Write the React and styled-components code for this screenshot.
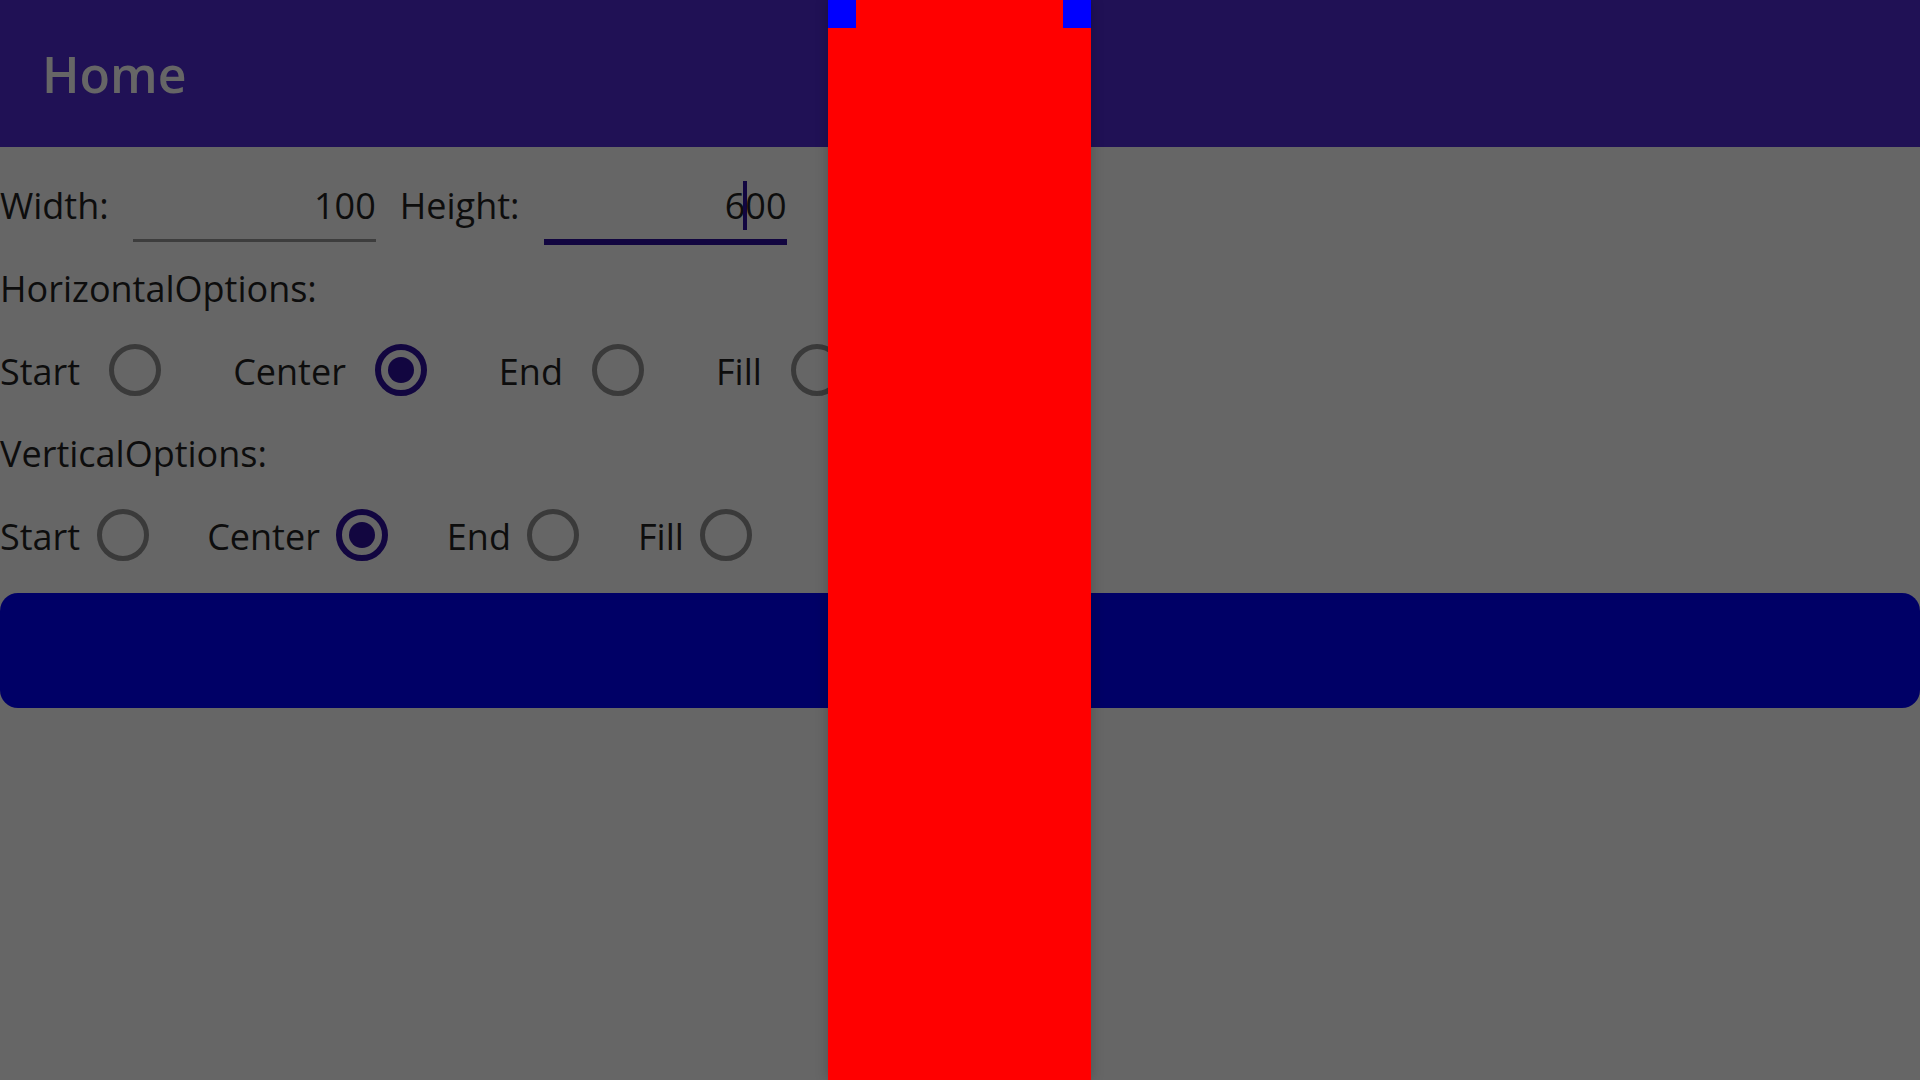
import React from "react";
import styled, { createGlobalStyle } from "styled-components";

const GlobalStyle = createGlobalStyle`
  html, body {
    margin: 0;
    padding: 0;
    height: 100%;
    background: #666666;
    overflow: hidden;
  }
  body {
    font-family: "Open Sans", "Noto Sans", sans-serif;
  }
  #root {
    height: 100%;
  }
`;

const Page = styled.div`
  position: relative;
  width: 100%;
  height: 100%;
  background: #666666;
`;

const Header = styled.header`
  height: 147px;
  display: flex;
  align-items: center;
  padding-left: 42px;
  background: #201155;
`;

const Title = styled.h1`
  margin: 0;
  font-size: 50px;
  font-weight: 600;
  color: #666666;
`;

const Content = styled.main`
  display: flex;
  flex-direction: column;
`;

const SizeRow = styled.div`
  display: flex;
  align-items: flex-start;
  gap: 24px;
  padding-top: 34px;
`;

const Label = styled.span`
  font-size: 36px;
  line-height: 49px;
  color: #0d0d0d;
  white-space: nowrap;
`;

const SectionLabel = styled(Label)`
  display: block;
  margin-top: ${(p) => p.$top}px;
`;

const Entry = styled.div`
  width: 243px;
  height: 49px;
  padding-bottom: 9px;
  text-align: right;
  font-size: 36px;
  line-height: 49px;
  color: #0d0d0d;
  border-bottom: ${(p) => (p.$focused ? "6px solid #120640" : "3px solid #3d3d3d")};
`;

const Caret = styled.span`
  display: inline-block;
  width: 4px;
  height: 49px;
  margin: 0 -2px;
  vertical-align: top;
  background: #120640;
`;

const RadioRow = styled.div`
  display: flex;
  align-items: flex-end;
  gap: ${(p) => p.$gap}px;
  margin-top: ${(p) => p.$top}px;
`;

const RadioItem = styled.label`
  display: flex;
  align-items: flex-end;
  gap: ${(p) => p.$gap}px;
`;

const Circle = styled.span`
  box-sizing: border-box;
  width: 52px;
  height: 52px;
  flex: none;
  border-radius: 50%;
  border: ${(p) => (p.$checked ? "6px solid #120640" : "5px solid #3a3a3a")};
  display: flex;
  align-items: center;
  justify-content: center;

  &::after {
    content: "";
    width: 26px;
    height: 26px;
    border-radius: 50%;
    background: ${(p) => (p.$checked ? "#120640" : "transparent")};
  }
`;

const Bar = styled.div`
  height: 115px;
  margin-top: 32px;
  border-radius: 18px;
  background: #000066;
`;

const RedBox = styled.div`
  position: absolute;
  top: 0;
  left: calc(50% - 132px);
  width: 263px;
  height: 1080px;
  background: #ff0000;
  box-shadow: 0 0 12px rgba(0, 0, 0, 0.22);
  display: flex;
  justify-content: space-between;
  align-items: flex-start;
`;

const Corner = styled.div`
  width: 28px;
  height: 28px;
  background: #0000ff;
`;

const options = ["Start", "Center", "End", "Fill"];

const RadioGroup = ({ selected, top, itemGap, labelGap }) => (
  <RadioRow $top={top} $gap={itemGap}>
    {options.map((name) => (
      <RadioItem key={name} $gap={labelGap}>
        <Label>{name}</Label>
        <Circle $checked={name === selected} />
      </RadioItem>
    ))}
  </RadioRow>
);

export default function App() {
  return (
    <>
      <GlobalStyle />
      <Page>
        <Header>
          <Title>Home</Title>
        </Header>
        <Content>
          <SizeRow>
            <Label>Width:</Label>
            <Entry>100</Entry>
            <Label>Height:</Label>
            <Entry $focused>
              6<Caret />00
            </Entry>
          </SizeRow>
          <SectionLabel $top={19}>HorizontalOptions:</SectionLabel>
          <RadioGroup selected="Center" top={31} itemGap={72} labelGap={29} />
          <SectionLabel $top={32.5}>VerticalOptions:</SectionLabel>
          <RadioGroup selected="Center" top={31.5} itemGap={58.5} labelGap={16.5} />
          <Bar />
        </Content>
        <RedBox>
          <Corner />
          <Corner />
        </RedBox>
      </Page>
    </>
  );
}
